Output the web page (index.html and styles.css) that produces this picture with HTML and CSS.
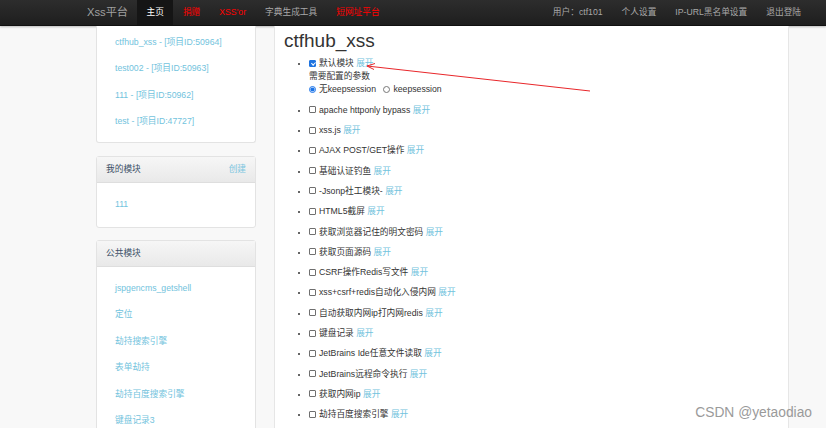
FILE: index.html
```html
<!DOCTYPE html>
<html lang="zh-CN">
<head>
    <meta charset="UTF-8">
    <title>Xss平台 - ctfhub_xss</title>
    <link rel="stylesheet" href="styles.css">
</head>
<body>
    <nav class="navbar">
        <a class="brand">Xss平台</a>
        <ul class="nav">
            <li class="active"><a>主页</a></li>
            <li><a class="hot">捐赠</a></li>
            <li><a class="hot">XSS'or</a></li>
            <li><a>字典生成工具</a></li>
            <li><a class="hot">短网址平台</a></li>
        </ul>
        <ul class="nav nav-right">
            <li><span>用户：ctf101</span></li>
            <li><a>个人设置</a></li>
            <li><a>IP-URL黑名单设置</a></li>
            <li><a>退出登陆</a></li>
        </ul>
    </nav>

    <div class="page">
        <aside class="sidebar">
            <div class="panel projects">
                <ul class="links">
                    <li><a>ctfhub_xss - [项目ID:50964]</a></li>
                    <li><a>test002 - [项目ID:50963]</a></li>
                    <li><a>111 - [项目ID:50962]</a></li>
                    <li><a>test - [项目ID:47727]</a></li>
                </ul>
            </div>

            <div class="panel">
                <div class="panel-head">我的模块<a class="create">创建</a></div>
                <ul class="links">
                    <li><a>111</a></li>
                </ul>
            </div>

            <div class="panel">
                <div class="panel-head">公共模块</div>
                <ul class="links">
                    <li><a>jspgencms_getshell</a></li>
                    <li><a>定位</a></li>
                    <li><a>劫持搜索引擎</a></li>
                    <li><a>表单劫持</a></li>
                    <li><a>劫持百度搜索引擎</a></li>
                    <li><a>键盘记录3</a></li>
                </ul>
            </div>
        </aside>

        <main class="content">
            <h2 class="title">ctfhub_xss</h2>
            <ul class="modules">
                <li>
                    <input type="checkbox" checked>默认模块 <a class="toggle">展开</a>
                    <div class="config">
                        需要配置的参数<br>
                        <input type="radio" name="keep" checked>无keepsession
                        <input type="radio" name="keep" class="radio-2">keepsession
                    </div>
                </li>
                <li><input type="checkbox">apache httponly bypass <a class="toggle">展开</a></li>
                <li><input type="checkbox">xss.js <a class="toggle">展开</a></li>
                <li><input type="checkbox">AJAX POST/GET操作 <a class="toggle">展开</a></li>
                <li><input type="checkbox">基础认证钓鱼 <a class="toggle">展开</a></li>
                <li><input type="checkbox">-Jsonp社工模块- <a class="toggle">展开</a></li>
                <li><input type="checkbox">HTML5截屏 <a class="toggle">展开</a></li>
                <li><input type="checkbox">获取浏览器记住的明文密码 <a class="toggle">展开</a></li>
                <li><input type="checkbox">获取页面源码 <a class="toggle">展开</a></li>
                <li><input type="checkbox">CSRF操作Redis写文件 <a class="toggle">展开</a></li>
                <li><input type="checkbox">xss+csrf+redis自动化入侵内网 <a class="toggle">展开</a></li>
                <li><input type="checkbox">自动获取内网ip打内网redis <a class="toggle">展开</a></li>
                <li><input type="checkbox">键盘记录 <a class="toggle">展开</a></li>
                <li><input type="checkbox">JetBrains Ide任意文件读取 <a class="toggle">展开</a></li>
                <li><input type="checkbox">JetBrains远程命令执行 <a class="toggle">展开</a></li>
                <li><input type="checkbox">获取内网ip <a class="toggle">展开</a></li>
                <li><input type="checkbox">劫持百度搜索引擎 <a class="toggle">展开</a></li>
            </ul>
        </main>
    </div>

    <!-- annotation drawn on the screenshot -->
    <svg class="arrow" width="826" height="428" viewBox="0 0 826 428">
        <line x1="367" y1="66" x2="590" y2="91" stroke="#e8262a" stroke-width="1"/>
        <line x1="367" y1="66" x2="375" y2="63.5" stroke="#e8262a" stroke-width="1"/>
        <line x1="367" y1="66" x2="374" y2="69.5" stroke="#e8262a" stroke-width="1"/>
    </svg>

    <div class="watermark">CSDN @yetaodiao</div>
</body>
</html>
```

FILE: styles.css
```css
body {
    margin: 0;
    height: 428px;
    overflow: hidden;
    background-color: #f8f8f8;
    font-family: 'Liberation Sans', 'Noto Sans CJK SC', sans-serif;
    font-size: 8.7px;
    color: #333;
}
a {
    text-decoration: none;
    cursor: pointer;
}
ul {
    margin: 0;
    padding: 0;
    list-style: none;
}

/* top bar */
.navbar {
    display: flex;
    height: 25px;
    line-height: 25px;
    padding: 0 15.5px 0 80px;
    background: linear-gradient(#2d2d2d, #1e1e1e);
    border-bottom: 1px solid #111;
    box-shadow: 0 1px 2px rgba(0,0,0,0.25);
}
.brand {
    padding: 0 9px 0 7px;
    font-size: 11.2px;
    color: #a0a0a0;
}
.nav {
    display: flex;
}
.nav li a,
.nav li span {
    display: block;
    padding: 0 9.5px;
    color: #a8a8a8;
}
.nav li.active {
    background-color: #151515;
}
.nav li.active a {
    color: #fff;
}
.nav li a.hot {
    color: #f00;
}
.nav-right {
    margin-left: auto;
}

/* page columns */
.page {
    display: flex;
    align-items: flex-start;
    padding-left: 96px;
    height: 402px;
}
.sidebar {
    width: 160px;
    flex-shrink: 0;
}
.panel {
    background: #fff;
    border: 1px solid #e3e3e3;
    border-radius: 3px;
    margin-bottom: 12px;
}
.panel.projects {
    border-top: none;
    border-radius: 0 0 3px 3px;
    margin-bottom: 13px;
}
.panel.projects .links {
    padding: 2.75px 0 7.25px 18px;
}
.panel-head {
    display: flex;
    justify-content: space-between;
    height: 25px;
    line-height: 25px;
    padding: 0 9px;
    background: linear-gradient(#f6f6f6, #e9e9e9);
    border-bottom: 1px solid #dedede;
    color: #3c4f66;
}
.panel-head .create {
    color: #7cc6df;
}
.links {
    padding: 8px 0 9px 18px;
}
.links li {
    line-height: 26.5px;
}
.links a {
    color: #72c3dd;
}

.content {
    margin-left: 18px;
    width: 515px;
    height: 100%;
    background: #fff;
    border-left: 1px solid #e6e6e6;
    border-right: 1px solid #e6e6e6;
    padding: 4.2px 0 0 9px;
    box-sizing: border-box;
}
.title {
    margin: 0;
    font-size: 19px;
    line-height: 22px;
    font-weight: normal;
    color: #333;
}
.modules {
    margin-top: 5.3px;
    padding-left: 25px;
    list-style: disc;
}
.modules li {
    line-height: 13px;
    margin-bottom: 7.3px;
}
.modules li::marker {
    font-size: 8px;
}
.modules input[type="checkbox"] {
    appearance: none;
    position: relative;
    width: 7px;
    height: 7px;
    margin: 0 3px 0 0;
    border: 1px solid #6f6f6f;
    border-radius: 1px;
    background: #fff;
    vertical-align: -0.5px;
    box-sizing: border-box;
}
.modules input[type="checkbox"]:checked {
    background: #1f74e0;
    border-color: #1f74e0;
}
.modules input[type="checkbox"]:checked::after {
    content: "";
    position: absolute;
    left: 1.5px;
    top: 0;
    width: 1.5px;
    height: 3.2px;
    border: solid #fff;
    border-width: 0 1px 1px 0;
    transform: rotate(45deg);
}
.modules input[type="radio"] {
    width: 7px;
    height: 7px;
    margin: 0 3px 0 0;
    vertical-align: -0.5px;
    accent-color: #1a73e8;
}
.modules .toggle {
    color: #72c3dd;
}
.config input.radio-2 {
    margin-left: 5px;
}

.arrow {
    position: absolute;
    left: 0;
    top: 0;
    pointer-events: none;
}
.watermark {
    position: absolute;
    right: 14px;
    bottom: 8px;
    font-size: 13.8px;
    color: #9a9a9a;
}
```
